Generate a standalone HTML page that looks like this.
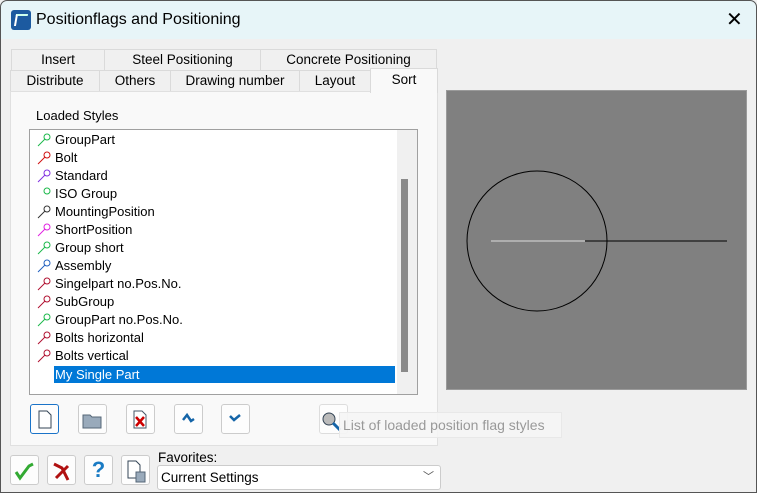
<!DOCTYPE html>
<html><head><style>
*{margin:0;padding:0;box-sizing:border-box}
body{width:757px;height:493px;overflow:hidden;background:#f0f0f0;font-family:"Liberation Sans",sans-serif;font-size:13px;color:#000;position:relative}
.a{position:absolute}
.win{left:0;top:0;width:757px;height:493px;border-radius:7px 7px 0 0;background:#f0f0f0;overflow:hidden}
.frame{left:0;top:0;width:757px;height:493px;border:1px solid #555;border-radius:7px 7px 0 0;pointer-events:none}
.title{left:0;top:0;width:757px;height:39px;background:#e7f5f8}
.tab{position:absolute;height:21px;border:1px solid #dadada;border-bottom:none;background:#f0f0f0;text-align:center;line-height:20px;font-size:13.5px}
.btn{position:absolute;width:29px;height:30px;border:1px solid #ccc;border-radius:3px;background:#fdfdfd}
.it{position:absolute;left:24px;height:18px;line-height:18px;font-size:13px}
</style></head><body>
<div class="a win">
<div class="a title"></div>
<div class="a" style="left:11px;top:10px;width:20px;height:20px;background:#1c5aa0;border-radius:3px"></div>
<div class="a" style="left:15px;top:14px;width:12px;height:12px;border-left:2px solid #fff;border-top:2px solid #cfe;transform:skewX(-10deg)"></div>
<div class="a" style="left:36px;top:11px;font-size:16px">Positionflags and Positioning</div>
<div class="a" style="left:726px;top:7px;font-size:20px">✕</div>

<div class="tab" style="left:11px;top:49px;width:94px">Insert</div>
<div class="tab" style="left:104px;top:49px;width:157px">Steel Positioning</div>
<div class="tab" style="left:260px;top:49px;width:177px">Concrete Positioning</div>
<div class="tab" style="left:10px;top:70px;width:90px">Distribute</div>
<div class="tab" style="left:99px;top:70px;width:72px">Others</div>
<div class="tab" style="left:170px;top:70px;width:130px">Drawing number</div>
<div class="tab" style="left:299px;top:70px;width:72px">Layout</div>
<div class="a" style="left:10px;top:91px;width:428px;height:355px;background:#f9f9f9;border:1px solid #e0e0e0"></div>
<div class="tab" style="left:370px;top:68px;width:68px;height:25px;background:#f9f9f9;line-height:22px">Sort</div>

<div class="a" style="left:36px;top:108px">Loaded Styles</div>
<div class="a" style="left:29px;top:129px;width:389px;height:266px;background:#fff;border:1px solid #a0a0a0">
 <div class="a" style="left:367px;top:0;width:20px;height:264px;background:#f0f0f0"></div>
 <div class="a" style="left:371px;top:49px;width:7px;height:193px;background:#8a8a8a"></div>
</div>
<div class="a" style="left:31px;top:131px;width:366px">
<div class="it" style="top:0">GroupPart</div>
<div class="it" style="top:18px">Bolt</div>
<div class="it" style="top:36px">Standard</div>
<div class="it" style="top:54px">ISO Group</div>
<div class="it" style="top:72px">MountingPosition</div>
<div class="it" style="top:90px">ShortPosition</div>
<div class="it" style="top:108px">Group short</div>
<div class="it" style="top:126px">Assembly</div>
<div class="it" style="top:144px">Singelpart no.Pos.No.</div>
<div class="it" style="top:162px">SubGroup</div>
<div class="it" style="top:180px">GroupPart no.Pos.No.</div>
<div class="it" style="top:198px">Bolts horizontal</div>
<div class="it" style="top:216px">Bolts vertical</div>
<div class="it" style="top:235px;left:23px;width:341px;height:17px;line-height:17px;background:#0078d7;color:#fff;padding-left:1px">My Single Part</div>
<svg class="a" style="left:4px;top:0" width="20" height="235">
<g fill="none" stroke-width="1">
<g stroke="#1bb84a"><circle cx="12" cy="6" r="3"/><line x1="10" y1="8" x2="3" y2="15"/></g>
<g stroke="#d01010"><circle cx="12" cy="24" r="3"/><line x1="10" y1="26" x2="3" y2="33"/></g>
<g stroke="#8030e0"><circle cx="12" cy="42" r="3"/><line x1="10" y1="44" x2="3" y2="51"/></g>
<g stroke="#1bb84a"><circle cx="12" cy="60" r="3"/></g>
<g stroke="#333"><circle cx="12" cy="78" r="3"/><line x1="10" y1="80" x2="3" y2="87"/></g>
<g stroke="#e020e0"><circle cx="12" cy="96" r="3"/><line x1="10" y1="98" x2="3" y2="105"/></g>
<g stroke="#1bb84a"><circle cx="12" cy="114" r="3"/><line x1="10" y1="116" x2="3" y2="123"/></g>
<g stroke="#2060c0"><circle cx="12" cy="132" r="3"/><line x1="10" y1="134" x2="3" y2="141"/></g>
<g stroke="#b01030"><circle cx="12" cy="150" r="3"/><line x1="10" y1="152" x2="3" y2="159"/></g>
<g stroke="#b01030"><circle cx="12" cy="168" r="3"/><line x1="10" y1="170" x2="3" y2="177"/></g>
<g stroke="#1bb84a"><circle cx="12" cy="186" r="3"/><line x1="10" y1="188" x2="3" y2="195"/></g>
<g stroke="#b01030"><circle cx="12" cy="204" r="3"/><line x1="10" y1="206" x2="3" y2="213"/></g>
<g stroke="#b01030"><circle cx="12" cy="222" r="3"/><line x1="10" y1="224" x2="3" y2="231"/></g>
</g></svg>
</div>

<div class="btn" style="left:30px;top:404px;border-color:#1a73c8"><svg width="27" height="28"><path d="M8 6h8l4 4v13H8z" fill="#fff" stroke="#345"/></svg></div>
<div class="btn" style="left:78px;top:404px"><svg width="27" height="28"><path d="M4 10h7l2 2h9v11H4z" fill="#9ab" stroke="#567"/></svg></div>
<div class="btn" style="left:126px;top:404px"><svg width="27" height="28"><path d="M7 6h8l4 4v13H7z" fill="#fff" stroke="#456"/><path d="M9 12l8 9M17 12l-8 9" stroke="#c00" stroke-width="2.5"/></svg></div>
<div class="btn" style="left:174px;top:404px"><svg width="27" height="28"><path d="M8 15l4-5 4 6 3-2" fill="none" stroke="#1565a8" stroke-width="2.5"/></svg></div>
<div class="btn" style="left:221px;top:404px"><svg width="27" height="28"><path d="M8 11l4 4 6-5" fill="none" stroke="#1565a8" stroke-width="2.5"/></svg></div>
<div class="btn" style="left:319px;top:404px;border-color:#ddd"><svg width="27" height="28"><circle cx="9" cy="14" r="6" fill="#bbb" stroke="#345"/><path d="M13 18l7 7" stroke="#1565a8" stroke-width="3"/></svg></div>
<div class="a" style="left:339px;top:412px;width:223px;height:26px;background:rgba(245,245,245,0.9);border:1px solid #e8e8e8;color:#999;font-size:14px;line-height:24px;padding-left:3px">List of loaded position flag styles</div>

<div class="a" style="left:446px;top:90px;width:301px;height:300px;background:#808080;border:1px solid #9a9a9a">
<svg width="299" height="298"><circle cx="90" cy="150" r="70" fill="none" stroke="#000"/><line x1="44" y1="150" x2="138" y2="150" stroke="#ddd"/><line x1="138" y1="150" x2="280" y2="150" stroke="#000"/></svg>
</div>

<div class="btn" style="left:10px;top:455px"><svg width="27" height="28"><path d="M5 16l4 6 9-12 4-2" fill="none" stroke="#3a3" stroke-width="3"/></svg></div>
<div class="btn" style="left:47px;top:455px"><svg width="27" height="28"><path d="M6 8l8 4 6 12M8 22l12-12" fill="none" stroke="#b01010" stroke-width="3"/></svg></div>
<div class="btn" style="left:84px;top:455px;text-align:center;font-weight:bold;font-size:22px;color:#1a7bc4;line-height:28px">?</div>
<div class="btn" style="left:121px;top:455px"><svg width="27" height="28"><path d="M6 5h8l4 4v13H6z" fill="#fff" stroke="#345"/><rect x="14" y="16" width="9" height="10" fill="#9ab" stroke="#567"/></svg></div>
<div class="a" style="left:158px;top:450px;font-size:13.5px">Favorites:</div>
<div class="a" style="left:157px;top:465px;width:284px;height:25px;background:#fff;border:1px solid #ccc;border-radius:3px;line-height:23px;padding-left:3px;font-size:13.5px">Current Settings<span class="a" style="right:6px;top:0;color:#555;font-size:11px">﹀</span></div>
</div>
<div class="a frame"></div>
</body></html>
